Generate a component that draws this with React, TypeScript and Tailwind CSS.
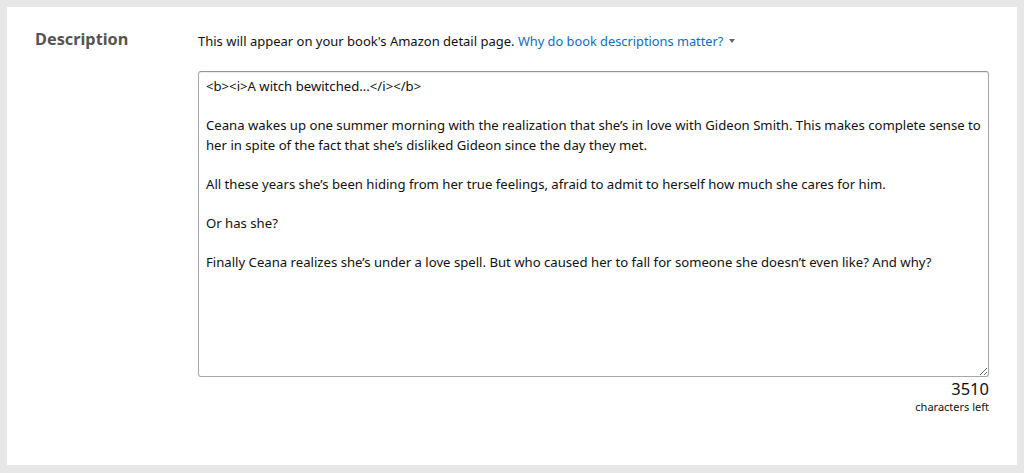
import React from 'react';

const description = `<b><i>A witch bewitched...</i></b>

Ceana wakes up one summer morning with the realization that she’s in love with Gideon Smith. This makes complete sense to her in spite of the fact that she’s disliked Gideon since the day they met.

All these years she’s been hiding from her true feelings, afraid to admit to herself how much she cares for him.

Or has she?

Finally Ceana realizes she’s under a love spell. But who caused her to fall for someone she doesn’t even like? And why?`;

const App = () => {
  return (
    <div className="min-h-[473px] bg-[#e7e7e7] px-[7px] pt-[7px] pb-[8px] font-['Noto_Sans',sans-serif] text-[#111]">
      <div className="flex h-[458px] bg-white">
        {/* Label column */}
        <div className="w-[191px] shrink-0 pl-[28px] pt-[20px]">
          <h2 className="text-[16.3px] font-bold leading-[24px] text-[#555]">Description</h2>
        </div>

        {/* Field */}
        <div className="w-[791px] pt-[24px]">
          <p className="text-[13px] leading-[20px]">
            This will appear on your book's Amazon detail page.{' '}
            <a href="#" className="text-[12.8px] text-[#0f6dc1]">
              Why do book descriptions matter?
            </a>
            <span className="ml-[6px] inline-block translate-y-[-2px] border-x-[3.5px] border-t-[4px] border-x-transparent border-t-[#666] align-middle" />
          </p>

          <textarea
            readOnly
            defaultValue={description}
            className="mt-[20px] block h-[306px] w-full resize rounded-[3px] border border-[#a6a6a6] border-t-[#949494] px-[7px] pt-[5px] text-[13.15px] leading-[19.5px] text-[#111] shadow-[inset_0_1px_0_rgba(0,0,0,0.07)] outline-none"
          />

          <div className="flex flex-col items-end">
            <span className="mt-[2px] text-[16.5px] leading-[20px] text-[#111]">3510</span>
            <span className="text-[11px] leading-[16px] text-[#111]">characters left</span>
          </div>
        </div>
      </div>
    </div>
  );
};

export default App;
